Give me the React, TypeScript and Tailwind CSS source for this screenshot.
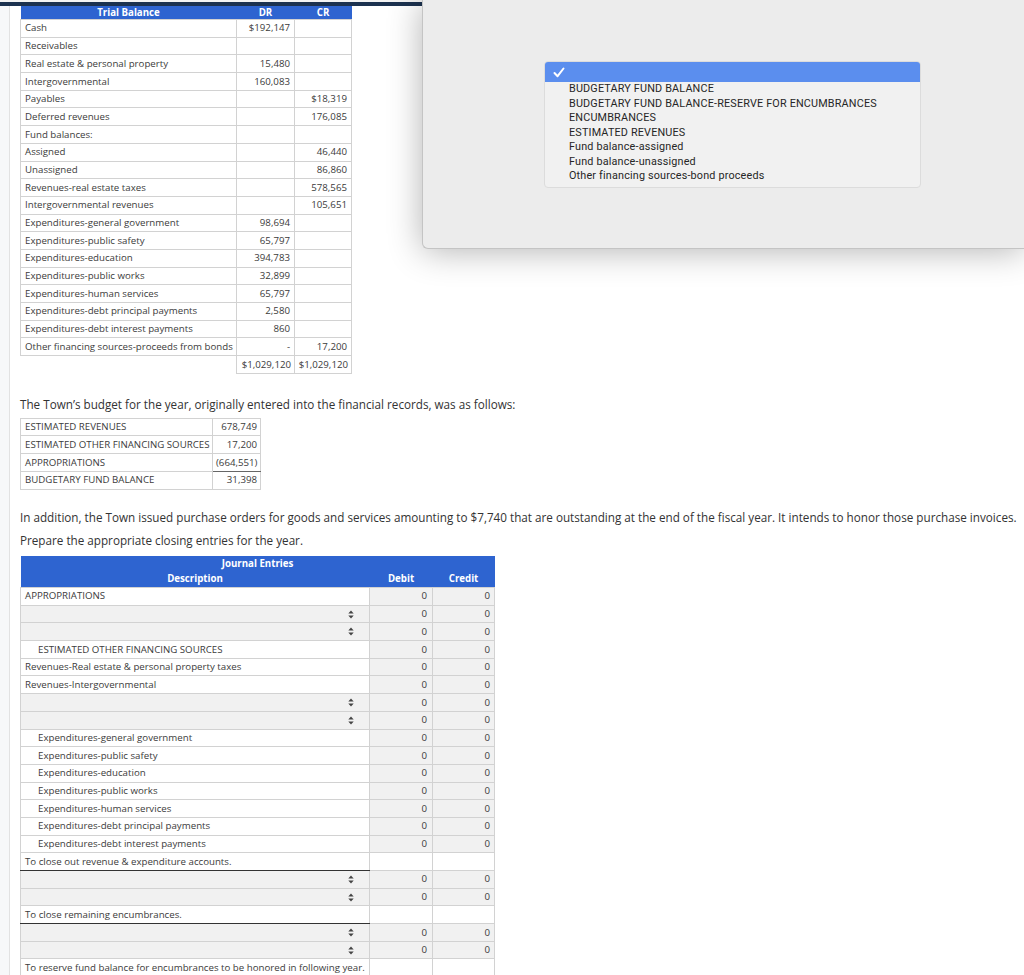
import React from 'react';

type TBRow = { label: string; dr?: string; cr?: string };

const trialRows: TBRow[] = [
  { label: 'Cash', dr: '$192,147' },
  { label: 'Receivables' },
  { label: 'Real estate & personal property', dr: '15,480' },
  { label: 'Intergovernmental', dr: '160,083' },
  { label: 'Payables', cr: '$18,319' },
  { label: 'Deferred revenues', cr: '176,085' },
  { label: 'Fund balances:' },
  { label: 'Assigned', cr: '46,440' },
  { label: 'Unassigned', cr: '86,860' },
  { label: 'Revenues-real estate taxes', cr: '578,565' },
  { label: 'Intergovernmental revenues', cr: '105,651' },
  { label: 'Expenditures-general government', dr: '98,694' },
  { label: 'Expenditures-public safety', dr: '65,797' },
  { label: 'Expenditures-education', dr: '394,783' },
  { label: 'Expenditures-public works', dr: '32,899' },
  { label: 'Expenditures-human services', dr: '65,797' },
  { label: 'Expenditures-debt principal payments', dr: '2,580' },
  { label: 'Expenditures-debt interest payments', dr: '860' },
  { label: 'Other financing sources-proceeds from bonds', dr: '-', cr: '17,200' },
];

const budgetRows = [
  { label: 'ESTIMATED REVENUES', value: '678,749' },
  { label: 'ESTIMATED OTHER FINANCING SOURCES', value: '17,200' },
  { label: 'APPROPRIATIONS', value: '(664,551)', underline: true },
  { label: 'BUDGETARY FUND BALANCE', value: '31,398' },
];

type JRow =
  | { kind: 'text'; label: string; indent?: boolean }
  | { kind: 'select' }
  | { kind: 'memo'; label: string; last?: boolean };

const journalRows: JRow[] = [
  { kind: 'text', label: 'APPROPRIATIONS' },
  { kind: 'select' },
  { kind: 'select' },
  { kind: 'text', label: 'ESTIMATED OTHER FINANCING SOURCES', indent: true },
  { kind: 'text', label: 'Revenues-Real estate & personal property taxes' },
  { kind: 'text', label: 'Revenues-Intergovernmental' },
  { kind: 'select' },
  { kind: 'select' },
  { kind: 'text', label: 'Expenditures-general government', indent: true },
  { kind: 'text', label: 'Expenditures-public safety', indent: true },
  { kind: 'text', label: 'Expenditures-education', indent: true },
  { kind: 'text', label: 'Expenditures-public works', indent: true },
  { kind: 'text', label: 'Expenditures-human services', indent: true },
  { kind: 'text', label: 'Expenditures-debt principal payments', indent: true },
  { kind: 'text', label: 'Expenditures-debt interest payments', indent: true },
  { kind: 'memo', label: 'To close out revenue & expenditure accounts.' },
  { kind: 'select' },
  { kind: 'select' },
  { kind: 'memo', label: 'To close remaining encumbrances.' },
  { kind: 'select' },
  { kind: 'select' },
  { kind: 'memo', label: 'To reserve fund balance for encumbrances to be honored in following year.', last: true },
];

const options = [
  'BUDGETARY FUND BALANCE',
  'BUDGETARY FUND BALANCE-RESERVE FOR ENCUMBRANCES',
  'ENCUMBRANCES',
  'ESTIMATED REVENUES',
  'Fund balance-assigned',
  'Fund balance-unassigned',
  'Other financing sources-bond proceeds',
];

function UpDown() {
  return (
    <svg width="6" height="9" viewBox="0 0 6 9" className="shrink-0">
      <path d="M0.3 3.6 L3 0.6 L5.7 3.6 Z" fill="#444" />
      <path d="M0.3 5.4 L3 8.4 L5.7 5.4 Z" fill="#444" />
    </svg>
  );
}

function TrialBalance() {
  return (
    <table className="w-[331px] table-fixed border-collapse whitespace-nowrap text-[9.7px] text-[#3b3b3b] leading-none">
      <colgroup>
        <col className="w-[216px]" />
        <col className="w-[58px]" />
        <col className="w-[57px]" />
      </colgroup>
      <thead>
        <tr className="h-[13.5px] bg-[#2e64d0] text-white">
          <th className="font-bold">Trial Balance</th>
          <th className="font-bold">DR</th>
          <th className="font-bold">CR</th>
        </tr>
      </thead>
      <tbody>
        {trialRows.map((r) => (
          <tr key={r.label} className="h-[17.7px]">
            <td className="border border-[#d2d2d2] px-[4px]">{r.label}</td>
            <td className="border border-[#d2d2d2] px-[4px] text-right">{r.dr}</td>
            <td className="border border-[#d2d2d2] px-[4px] text-right">{r.cr}</td>
          </tr>
        ))}
        <tr className="h-[17.7px]">
          <td />
          <td className="border border-[#d2d2d2] border-t-[#555] px-[3px] text-right">$1,029,120</td>
          <td className="border border-[#d2d2d2] border-t-[#555] px-[3px] text-right">$1,029,120</td>
        </tr>
      </tbody>
    </table>
  );
}

function BudgetTable() {
  return (
    <table className="w-[240px] table-fixed border-collapse whitespace-nowrap text-[9.7px] text-[#3b3b3b] leading-none">
      <colgroup>
        <col className="w-[192px]" />
        <col className="w-[48px]" />
      </colgroup>
      <tbody>
        {budgetRows.map((r) => (
          <tr key={r.label} className="h-[17.7px]">
            <td className="border border-[#d2d2d2] px-[4px]">{r.label}</td>
            <td
              className={`border border-[#d2d2d2] px-[3px] text-right ${
                r.underline ? 'border-b-[#666]' : ''
              }`}
            >
              {r.value}
            </td>
          </tr>
        ))}
      </tbody>
    </table>
  );
}

function JournalTable() {
  return (
    <table className="w-[474px] table-fixed border-collapse whitespace-nowrap text-[9.7px] text-[#3b3b3b] leading-none">
      <colgroup>
        <col className="w-[349px]" />
        <col className="w-[63px]" />
        <col className="w-[62px]" />
      </colgroup>
      <thead>
        <tr className="h-[15px] bg-[#2e64d0] text-white">
          <th colSpan={3} className="pt-[2px] font-bold">Journal Entries</th>
        </tr>
        <tr className="h-[17px] bg-[#2e64d0] text-white">
          <th className="font-bold">Description</th>
          <th className="font-bold">Debit</th>
          <th className="font-bold">Credit</th>
        </tr>
      </thead>
      <tbody>
        {journalRows.map((r, i) => {
          if (r.kind === 'memo') {
            return (
              <tr key={i} className="h-[17.7px]">
                <td
                  className={`border border-[#d2d2d2] px-[4px] ${r.last ? '' : 'border-b-[#333]'}`}
                >
                  {r.label}
                </td>
                <td className="border border-[#d2d2d2]" />
                <td className="border border-[#d2d2d2]" />
              </tr>
            );
          }
          return (
            <tr key={i} className="h-[17.7px]">
              {r.kind === 'select' ? (
                <td className="border border-[#d2d2d2] bg-[#f1f1f1] pr-[15px]">
                  <div className="flex justify-end">
                    <UpDown />
                  </div>
                </td>
              ) : (
                <td className={`border border-[#d2d2d2] bg-white ${r.indent ? 'pl-[17px]' : 'pl-[4px]'}`}>
                  {r.label}
                </td>
              )}
              <td className="border border-[#d2d2d2] bg-[#f1f1f1] px-[5px] text-right">0</td>
              <td className="border border-[#d2d2d2] bg-[#f1f1f1] px-[4px] text-right">0</td>
            </tr>
          );
        })}
      </tbody>
    </table>
  );
}

function SelectPopup() {
  return (
    <div className="absolute right-0 top-0 h-[249px] w-[602px] rounded-bl-[6px] border-l border-b border-[#c4c4c4] bg-[#ececec] shadow-[0_2px_34px_rgba(0,0,0,0.3)]">
      <div className="ml-[121px] mt-[61px] w-[377px] overflow-hidden rounded-[4px] border border-[#dcdcdc] bg-[#f1f1f1] pb-[3px] font-['Roboto',sans-serif] text-[10.8px] tracking-[0.18px] text-[#262626]">
        <div className="flex h-[20px] items-center bg-[#5b8eee] pl-[8px]">
          <svg width="12" height="11" viewBox="0 0 12 11">
            <path d="M1.5 6 L4.6 9.2 L10.5 1.5" fill="none" stroke="white" strokeWidth="2" strokeLinecap="round" strokeLinejoin="round" />
          </svg>
        </div>
        {options.map((o) => (
          <div key={o} className="flex h-[14.5px] items-center pl-[24px]">
            {o}
          </div>
        ))}
      </div>
    </div>
  );
}

export default function App() {
  return (
    <div className="relative h-[975px] overflow-hidden bg-white font-['Open_Sans',sans-serif] text-[#333]">
      <div className="h-[2px] bg-[#f3f3f3]" />
      <div className="h-[4px] bg-[#1c324f]" />

      <div className="flex">
        <div className="w-[10px] shrink-0 self-stretch border-r border-[#e2e2e2] bg-[#f7f8f9]" />

        <div className="pl-[10px]">
          <TrialBalance />

          <p className="mt-[23px] text-[11.7px] leading-[14px]">
            The Town’s budget for the year, originally entered into the financial records, was as follows:
          </p>
          <div className="mt-[7px]">
            <BudgetTable />
          </div>

          <p className="mt-[20px] whitespace-nowrap text-[11.7px] leading-[14px]">
            In addition, the Town issued purchase orders for goods and services amounting to $7,740 that are
            outstanding at the end of the fiscal year. It intends to honor those purchase invoices.
          </p>
          <p className="mt-[9px] text-[11.7px] leading-[14px]">
            Prepare the appropriate closing entries for the year.
          </p>

          <div className="mt-[9px]">
            <JournalTable />
          </div>
        </div>
      </div>

      <SelectPopup />
    </div>
  );
}
